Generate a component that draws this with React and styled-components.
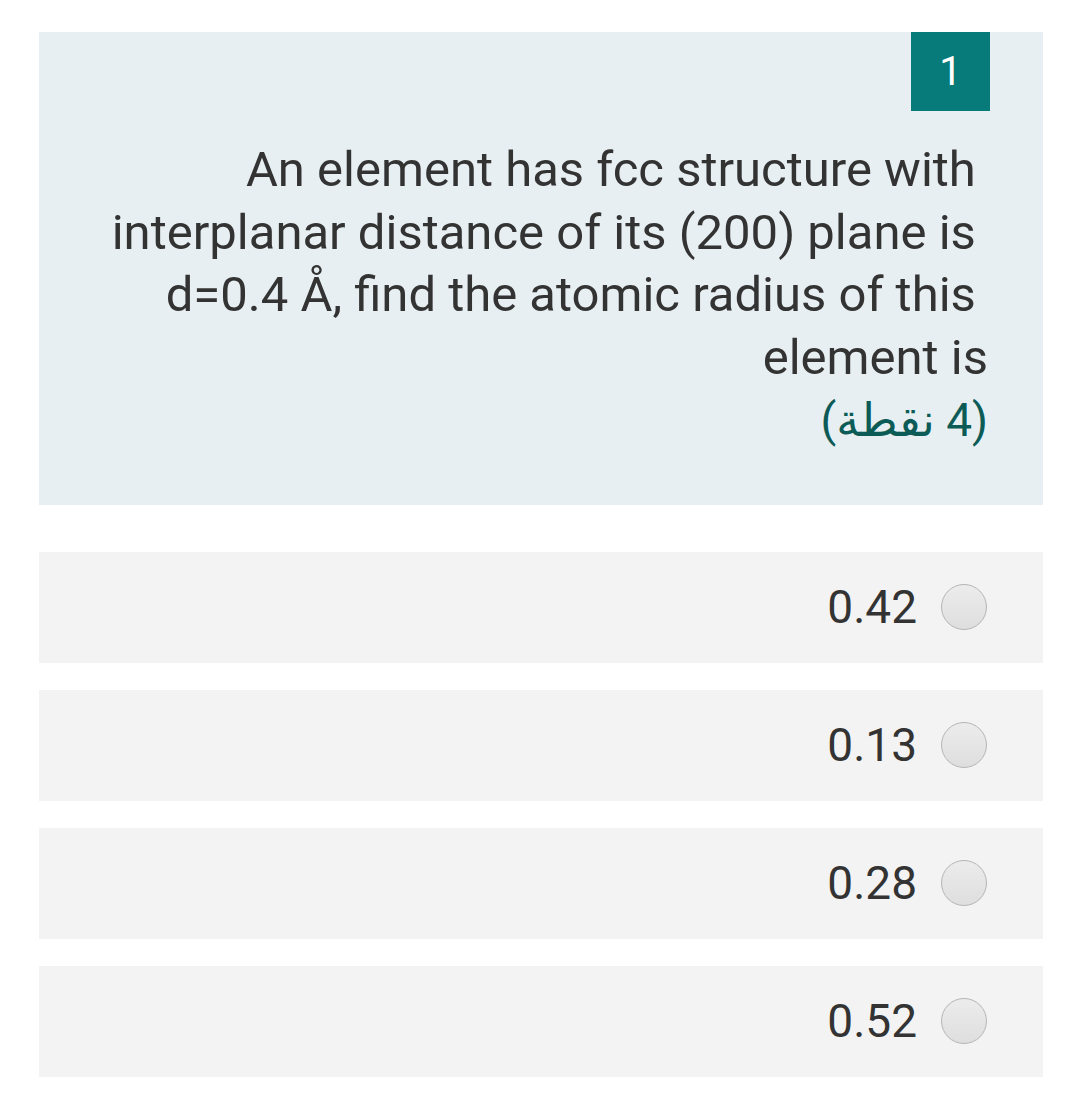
import React from 'react';
import styled, { createGlobalStyle } from 'styled-components';

const GlobalStyle = createGlobalStyle`
  body {
    margin: 0;
    background: #ffffff;
    font-family: Roboto, 'Noto Sans', 'DejaVu Sans', sans-serif;
  }
`;

const Page = styled.div`
  padding: 32px 37px 20px 39px;
  display: flex;
  flex-direction: column;
`;

const QuestionCard = styled.div`
  background: #e7eff2;
  padding: 0 55px 53px 55px;
  display: flex;
  flex-direction: column;
  align-items: flex-end;
`;

const NumberBadge = styled.div`
  width: 79px;
  height: 79px;
  margin-right: -2px;
  background: #077a7a;
  color: #ffffff;
  font-size: 40px;
  display: flex;
  align-items: center;
  justify-content: center;
`;

const QuestionText = styled.div`
  align-self: stretch;
  margin-top: 28px;
  font-size: 49px;
  line-height: 62.5px;
  color: #333333;
  text-align: right;
  white-space: break-spaces;
`;

const Points = styled.div`
  font-size: 46px;
  line-height: 62.5px;
  color: #0c5b56;
  direction: rtl;
`;

const Options = styled.div`
  margin-top: 47px;
  display: flex;
  flex-direction: column;
  gap: 27px;
`;

const OptionRow = styled.label`
  height: 111px;
  background: #f3f3f3;
  display: flex;
  align-items: center;
  justify-content: flex-end;
  gap: 24px;
  padding-right: 56px;
  font-size: 46px;
  color: #333333;
`;

const Radio = styled.span`
  width: 44px;
  height: 44px;
  border-radius: 50%;
  border: 1px solid #b5b5b5;
  background: linear-gradient(#ececec, #dedede);
  box-sizing: content-box;
`;

const answers = ['0.42', '0.13', '0.28', '0.52'];

const App = () => {
  return (
    <Page>
      <GlobalStyle />
      <QuestionCard>
        <NumberBadge>1</NumberBadge>
        <QuestionText>
          An element has fcc structure with interplanar distance of its (200) plane is d=0.4 Å, find the atomic radius of this element is
        </QuestionText>
        <Points>(4 نقطة)</Points>
      </QuestionCard>
      <Options>
        {answers.map((a) => (
          <OptionRow key={a}>
            <span>{a}</span>
            <Radio />
          </OptionRow>
        ))}
      </Options>
    </Page>
  );
};

export default App;
